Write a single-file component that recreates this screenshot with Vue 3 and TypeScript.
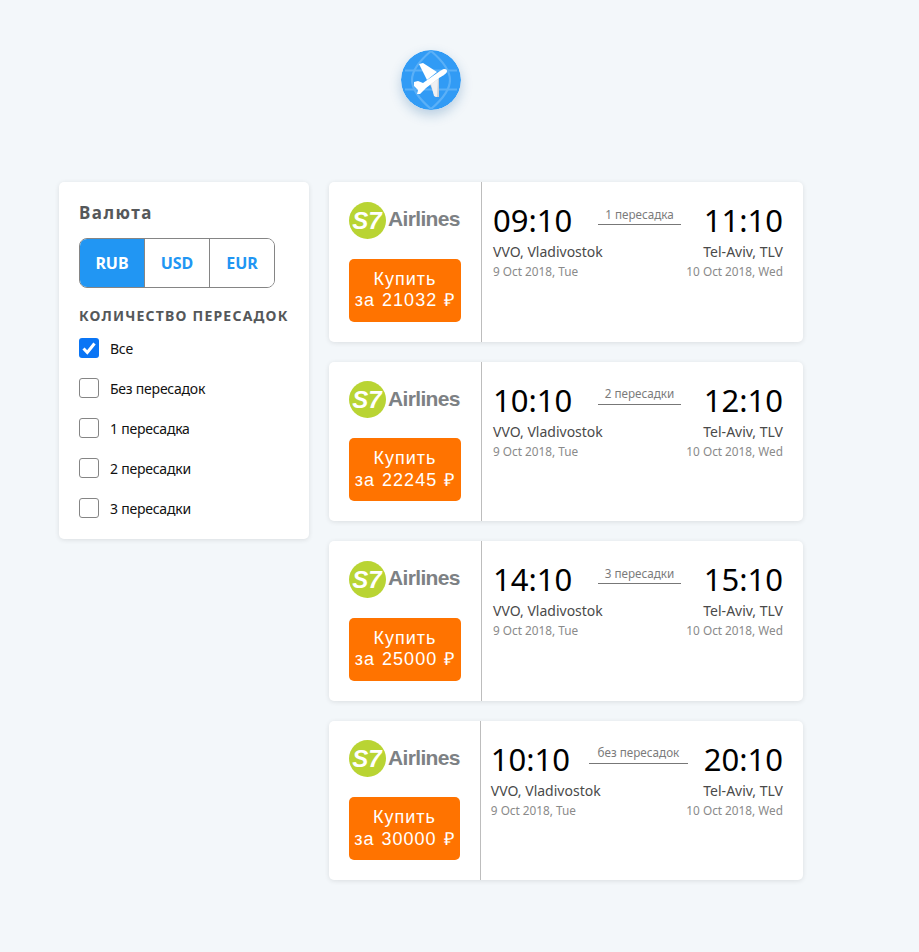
<template>
  <div class="page">
    <header class="logo-wrap">
      <svg class="logo" width="60" height="60" viewBox="0 0 60 60">
        <circle cx="30" cy="30" r="30" fill="#319bf5" />
        <g fill="none" stroke="#5bb0f7" stroke-width="2.2">
          <path d="M30 1 C17 12 11 22 11 30 C11 38 17 48 30 59" />
          <path d="M30 1 C43 12 49 22 49 30 C49 38 43 48 30 59" />
          <path d="M4 20.500 H56" />
          <path d="M4 39.500 H56" />
        </g>
        <path d="M29 34 L34 47 L38 47 L38 27 Z" fill="#c9cfd6" />
        <path d="M13 32 L17 31 L22 33 L39 21 C43 18 46 18.500 46 21 C46 23.500 43 25 38 28 L25 38 L19 44 L16 44 L17 40 L13 36 Z" fill="#ffffff" />
        <path d="M18 14 L22 13 L36 22 L26 30 Z" fill="#ffffff" />
        <path d="M30 34 L33 46 L36 47 L37 29 Z" fill="#eef0f3" />
      </svg>
    </header>

    <main class="layout">
      <aside class="filters">
        <h2 class="filters-title">Валюта</h2>
        <div class="currency">
          <button
            v-for="c in currencies"
            :key="c"
            class="currency-btn"
            :class="{ active: c === currency }"
            @click="currency = c"
          >{{ c }}</button>
        </div>
        <h3 class="filters-sub">Количество пересадок</h3>
        <label v-for="s in stopOptions" :key="s.label" class="check-row">
          <input v-model="s.checked" type="checkbox" class="check-input" />
          <span class="check-box" :class="{ checked: s.checked }">
            <svg v-if="s.checked" width="20" height="20" viewBox="0 0 20 20">
              <path d="M4.500 10.500 L8.300 14.500 L15.500 5.500" fill="none" stroke="#fff" stroke-width="3" />
            </svg>
          </span>
          <span class="check-label">{{ s.label }}</span>
        </label>
      </aside>

      <section class="tickets">
        <article v-for="t in tickets" :key="t.price" class="ticket">
          <div class="buy" :class="{ narrow: t.narrow }">
            <div class="carrier">
              <svg width="37" height="37" viewBox="0 0 37 37" class="carrier-mark">
                <circle cx="18.500" cy="18.500" r="18.500" fill="#b9d433" />
                <text x="18" y="27" text-anchor="middle" class="s7">S7</text>
              </svg>
              <span class="carrier-name">Airlines</span>
            </div>
            <button class="buy-btn">Купить<br />за {{ t.price }} ₽</button>
          </div>
          <div class="info" :class="{ wide: t.narrow }">
            <div class="times">
              <span class="time">{{ t.from }}</span>
              <div class="stops">
                <span class="stops-label">{{ t.stops }}</span>
              </div>
              <span class="time">{{ t.to }}</span>
            </div>
            <div class="places">
              <span>VVO, Vladivostok</span>
              <span>Tel-Aviv, TLV</span>
            </div>
            <div class="dates">
              <span>9 Oct 2018, Tue</span>
              <span>10 Oct 2018, Wed</span>
            </div>
          </div>
        </article>
      </section>
    </main>
  </div>
</template>

<script setup lang="ts">
import { ref, Ref } from 'vue'

type Ticket = {
  price: number,
  from: string,
  to: string,
  stops: string,
  narrow?: boolean
}

type StopOption = {
  label: string,
  checked: boolean
}

const currencies = ['RUB', 'USD', 'EUR']
const currency = ref('RUB')

const stopOptions: Ref<StopOption[]> = ref([
  { label: 'Все', checked: true },
  { label: 'Без пересадок', checked: false },
  { label: '1 пересадка', checked: false },
  { label: '2 пересадки', checked: false },
  { label: '3 пересадки', checked: false }
])

const tickets: Ticket[] = [
  { price: 21032, from: '09:10', to: '11:10', stops: '1 пересадка' },
  { price: 22245, from: '10:10', to: '12:10', stops: '2 пересадки' },
  { price: 25000, from: '14:10', to: '15:10', stops: '3 пересадки' },
  { price: 30000, from: '10:10', to: '20:10', stops: 'без пересадок', narrow: true }
]
</script>

<style>
html, body {
  margin: 0;
  background: #f3f7fa;
}
</style>

<style scoped>
.page {
  width: 919px;
  height: 952px;
  background: #f3f7fa;
  font-family: "Noto Sans", "Open Sans", sans-serif;
  overflow: hidden;
}

.logo-wrap {
  padding: 50px 0 0 401px;
  height: 182px;
  box-sizing: border-box;
}

.logo {
  display: block;
  border-radius: 50%;
  box-shadow: 0 5px 12px rgba(33, 100, 160, 0.28);
}

.layout {
  display: flex;
  align-items: flex-start;
  gap: 20px;
  padding-left: 59px;
}

.filters {
  width: 250px;
  height: 357px;
  box-sizing: border-box;
  padding: 20px;
  background: #fff;
  border-radius: 5px;
  box-shadow: 0 1px 5px rgba(0, 0, 0, 0.1);
}

.filters-title {
  margin: 0;
  font-size: 17px;
  line-height: 22px;
  font-weight: 700;
  letter-spacing: 1.500px;
  color: #55585a;
}

.currency {
  display: flex;
  width: 196px;
  height: 50px;
  margin-top: 14px;
  box-sizing: border-box;
  border: 1px solid #858585;
  border-radius: 8px;
  overflow: hidden;
}

.currency-btn {
  flex: 1;
  padding: 0;
  border: 0;
  border-left: 1px solid #858585;
  background: #fff;
  color: #2196f3;
  font-family: inherit;
  font-size: 16px;
  font-weight: 700;
}

.currency-btn:first-child {
  border-left: 0;
}

.currency-btn.active {
  background: #2196f3;
  color: #fff;
}

.filters-sub {
  margin: 19px 0 13px;
  font-size: 14px;
  line-height: 18px;
  font-weight: 700;
  letter-spacing: 1.200px;
  text-transform: uppercase;
  color: #55585a;
}

.check-row {
  display: flex;
  align-items: center;
  height: 20px;
  margin-bottom: 20px;
}

.check-input {
  display: none;
}

.check-box {
  width: 20px;
  height: 20px;
  box-sizing: border-box;
  border: 1px solid #858585;
  border-radius: 3px;
  background: #fff;
}

.check-box.checked {
  border: 0;
  background: #0a75f5;
}

.check-box svg {
  display: block;
}

.check-label {
  margin-left: 11px;
  font-size: 14px;
  letter-spacing: -0.230px;
  color: #111;
}

.tickets {
  display: flex;
  flex-direction: column;
  gap: 20px;
  width: 474px;
}

.ticket {
  display: flex;
  height: 159.500px;
  background: #fff;
  border-radius: 5px;
  box-shadow: 0 1px 5px rgba(0, 0, 0, 0.1);
}

.buy {
  flex: 0 0 153px;
  box-sizing: border-box;
  padding: 20px 20px 0;
  border-right: 1px solid #bdbdbd;
}

.buy.narrow {
  flex-basis: 151px;
}

.carrier {
  display: flex;
  align-items: center;
  height: 36.600px;
  white-space: nowrap;
}

.carrier-mark {
  flex: none;
}

.s7 {
  font-family: "Liberation Sans", sans-serif;
  font-size: 24px;
  font-weight: 700;
  font-style: italic;
  fill: #fff;
}

.carrier-name {
  margin: -2px 0 0 2px;
  font-family: "Liberation Sans", sans-serif;
  font-size: 21px;
  font-weight: 700;
  letter-spacing: -0.650px;
  color: #7d8184;
}

.buy-btn {
  display: block;
  width: 100%;
  height: 63px;
  margin-top: 20px;
  padding: 0;
  border: 0;
  border-radius: 5px;
  background: #ff7300;
  color: #fff;
  font-family: "Liberation Sans", sans-serif;
  font-size: 18px;
  line-height: 21.600px;
  letter-spacing: 1px;
  word-spacing: 1px;
}

.info {
  flex: 1;
  min-width: 0;
  padding: 17px 20px 0 11px;
}

.info.wide {
  padding-left: 10px;
}

.times {
  display: flex;
  justify-content: space-between;
  align-items: flex-start;
}

.time {
  font-size: 31px;
  line-height: 43px;
  color: #000;
}

.stops {
  flex: 1;
  margin: 5.500px 23px 0 26px;
  padding-bottom: 0.500px;
  text-align: center;
  border-bottom: 1px solid #777;
}

.info.wide .stops {
  margin: 5.500px 16px 0 19px;
}

.stops-label {
  display: block;
  font-size: 11.700px;
  line-height: 19px;
  color: #7b7b7b;
}

.places {
  display: flex;
  justify-content: space-between;
  font-size: 14px;
  line-height: 20px;
  color: #4a4a4a;
}

.dates {
  display: flex;
  justify-content: space-between;
  font-size: 11.800px;
  line-height: 19px;
  color: #8a8a8a;
}
</style>
